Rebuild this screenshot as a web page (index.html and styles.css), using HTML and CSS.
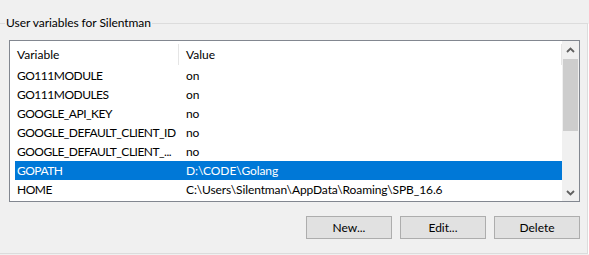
FILE: index.html
```html
<!DOCTYPE html>
<html>
<head>
  <title>Environment Variables</title>
  <link rel="stylesheet" href="styles.css">
</head>
<body>
  <div class="group">
    <div class="group-title">User variables for Silentman</div>

    <div class="listbox">
      <div class="list">
        <div class="list-header">
          <div class="col-name">Variable</div>
          <div class="col-value">Value</div>
        </div>
        <div class="row"><div class="col-name">GO111MODULE</div><div class="col-value">on</div></div>
        <div class="row"><div class="col-name">GO111MODULES</div><div class="col-value">on</div></div>
        <div class="row"><div class="col-name">GOOGLE_API_KEY</div><div class="col-value">no</div></div>
        <div class="row"><div class="col-name">GOOGLE_DEFAULT_CLIENT_ID</div><div class="col-value">no</div></div>
        <div class="row"><div class="col-name">GOOGLE_DEFAULT_CLIENT_...</div><div class="col-value">no</div></div>
        <div class="row selected"><div class="col-name">GOPATH</div><div class="col-value">D:\CODE\Golang</div></div>
        <div class="row"><div class="col-name">HOME</div><div class="col-value">C:\Users\Silentman\AppData\Roaming\SPB_16.6</div></div>
      </div>

      <div class="scrollbar">
        <div class="scroll-btn">
          <svg width="9" height="6" viewBox="0 0 9 6"><polyline points="1,5 4.5,1.5 8,5" fill="none" stroke="#606060" stroke-width="1.8"/></svg>
        </div>
        <div class="scroll-track">
          <div class="scroll-thumb"></div>
        </div>
        <div class="scroll-btn">
          <svg width="9" height="6" viewBox="0 0 9 6"><polyline points="1,1 4.5,4.5 8,1" fill="none" stroke="#606060" stroke-width="1.8"/></svg>
        </div>
      </div>
    </div>

    <div class="buttons">
      <button class="btn">New...</button>
      <button class="btn">Edit...</button>
      <button class="btn">Delete</button>
    </div>
  </div>
</body>
</html>
```

FILE: styles.css
```css
/* Reset */
* {
    margin: 0;
    padding: 0;
    box-sizing: border-box;
}

body {
    font-family: Lato, "Noto Sans", sans-serif;
    font-size: 12px;
    color: #000;
    background-color: #f0f0f0;
    overflow: hidden;
}

/* Group box (left edge runs off the window) */
.group {
    width: 590px;
    margin: 23px 0 0 -2px;
    padding: 0 7px 14px 10px;
    border: 1px solid #dcdcdc;
    box-shadow: 1px 1px 0 #fff;
}

.group-title {
    width: fit-content;
    margin: -9px 0 0 -4px;
    padding: 0 1px;
    line-height: 16px;
    background-color: #f0f0f0;
    letter-spacing: -0.05px;
}

/* List view */
.listbox {
    display: flex;
    width: 571px;
    height: 162px;
    margin-top: 9px;
    border: 1px solid #828790;
    background-color: #fff;
}

.list {
    flex: 1;
    padding-left: 5px;
    overflow: hidden;
}

.list-header,
.row {
    display: flex;
    white-space: nowrap;
}

.list-header {
    height: 25px;
    align-items: center;
}

.list-header .col-name,
.list-header .col-value {
    height: 21px;
    line-height: 21px;
    margin-top: 1px;
    border-right: 1px solid #e5e5e5;
    letter-spacing: 0;
}

.col-name {
    width: 164px;
    padding-left: 2px;
    overflow: hidden;
    letter-spacing: -0.5px;
}

.col-value {
    flex: 1;
    padding-left: 7px;
    overflow: hidden;
    letter-spacing: -0.1px;
}

.row {
    height: 19px;
    line-height: 19px;
}

.row.selected {
    background-color: #0078d7;
    color: #fff;
}

/* Scrollbar */
.scrollbar {
    width: 17px;
    display: flex;
    flex-direction: column;
    background-color: #f0f0f0;
}

.scroll-btn {
    height: 17px;
    display: flex;
    align-items: center;
    justify-content: center;
}

.scroll-track {
    flex: 1;
    padding: 1px 1px 0;
}

.scroll-thumb {
    height: 72px;
    background-color: #cdcdcd;
}

/* Buttons */
.buttons {
    display: flex;
    justify-content: flex-end;
    gap: 8px;
    width: 571px;
    margin-top: 14px;
}

.btn {
    width: 86px;
    height: 23px;
    font-family: inherit;
    font-size: 12px;
    color: #000;
    background-color: #e1e1e1;
    border: 1px solid #adadad;
}
```
